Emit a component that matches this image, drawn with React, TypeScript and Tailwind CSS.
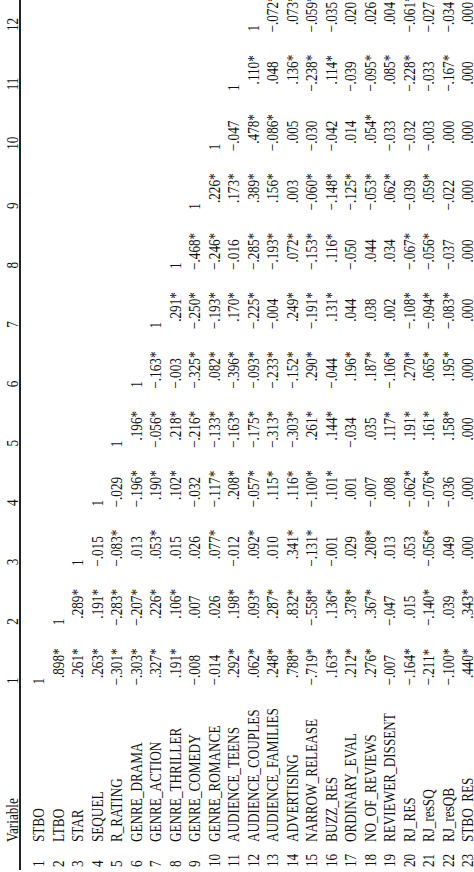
const rows: [string, string[]][] = [
  ["STBO", ["1"]],
  ["LTBO", [".898*", "1"]],
  ["STAR", [".261*", ".289*", "1"]],
  ["SEQUEL", [".263*", ".191*", "−.015", "1"]],
  ["R_RATING", ["−.301*", "−.283*", "−.083*", "−.029", "1"]],
  ["GENRE_DRAMA", ["−.303*", "−.207*", ".013", "−.196*", ".196*", "1"]],
  ["GENRE_ACTION", [".327*", ".226*", ".053*", ".190*", "−.056*", "−.163*", "1"]],
  ["GENRE_THRILLER", [".191*", ".106*", ".015", ".102*", ".218*", "−.003", ".291*", "1"]],
  ["GENRE_COMEDY", ["−.008", ".007", ".026", "−.032", "−.216*", "−.325*", "−.250*", "−.468*", "1"]],
  ["GENRE_ROMANCE", ["−.014", ".026", ".077*", "−.117*", "−.133*", ".082*", "−.193*", "−.246*", ".226*", "1"]],
  ["AUDIENCE_TEENS", [".292*", ".198*", "−.012", ".208*", "−.163*", "−.396*", ".170*", "−.016", ".173*", "−.047", "1"]],
  ["AUDIENCE_COUPLES", [".062*", ".093*", ".092*", "−.057*", "−.175*", "−.093*", "−.225*", "−.285*", ".389*", ".478*", ".110*", "1"]],
  ["AUDIENCE_FAMILIES", [".248*", ".287*", ".010", ".115*", "−.313*", "−.233*", "−.004", "−.193*", ".156*", "−.086*", ".048", "−.072*"]],
  ["ADVERTISING", [".788*", ".832*", ".341*", ".116*", "−.303*", "−.152*", ".249*", ".072*", ".003", ".005", ".136*", ".073*"]],
  ["NARROW_RELEASE", ["−.719*", "−.558*", "−.131*", "−.100*", ".261*", ".290*", "−.191*", "−.153*", "−.060*", "−.030", "−.238*", "−.059*"]],
  ["BUZZ_RES", [".163*", ".136*", "−.001", ".101*", ".144*", "−.044", ".131*", ".116*", "−.148*", "−.042", ".114*", "−.035"]],
  ["ORDINARY_EVAL", [".212*", ".378*", ".029", ".001", "−.034", ".196*", ".044", "−.050", "−.125*", ".014", "−.039", ".020"]],
  ["NO_OF_REVIEWS", [".276*", ".367*", ".208*", "−.007", ".035", ".187*", ".038", ".044", "−.053*", ".054*", "−.095*", ".026"]],
  ["REVIEWER_DISSENT", ["−.007", "−.047", ".013", ".008", ".117*", "−.106*", ".002", ".034", ".062*", "−.033", ".085*", ".004"]],
  ["RJ_RES", ["−.164*", ".015", ".053", "−.062*", ".191*", ".270*", "−.108*", "−.067*", "−.039", "−.032", "−.228*", "−.061*"]],
  ["RJ_resSQ", ["−.211*", "−.140*", "−.056*", "−.076*", ".161*", ".065*", "−.094*", "−.056*", ".059*", "−.003", "−.033", "−.027"]],
  ["RJ_resQB", ["−.100*", ".039", ".049", "−.036", ".158*", ".195*", "−.083*", "−.037", "−.022", ".000", "−.167*", "−.034"]],
  ["STBO_RES", [".440*", ".343*", ".000", ".000", ".000", ".000", ".000", ".000", ".000", ".000", ".000", ".000"]],
];

// widths are before the 0.776 horizontal squeeze of the printed table
const cols = "grid grid-cols-[36px_199.8px_repeat(12,76.5px)]";

// sign slot + decimal part, so the points line up down each column
const Value = ({ v }: { v: string }) => {
  const neg = v.startsWith("−");
  const isOne = v === "1";
  const rest = neg ? v.slice(1) : isOne ? "" : v;
  return (
    <div className="flex">
      <span className="w-[11.6px] text-right">{neg ? "−" : isOne ? "1" : ""}</span>
      <span>{rest}</span>
    </div>
  );
};

const App = () => {
  return (
    <div className="w-[474px] h-[872px] overflow-hidden bg-white">
      <div
        className="w-[1124px] h-[474px] origin-top-left scale-x-[0.776] -rotate-90 translate-y-[872px] text-[17px] text-[#111] whitespace-nowrap"
        style={{ fontFamily: '"Liberation Serif", "Times New Roman", serif' }}
      >
        <div className={`${cols} h-[21px] -mt-[2px] items-center border-b-[2.5px] border-[#222]`}>
          <span />
          <span>Variable</span>
          {Array.from({ length: 12 }, (_, i) => (
            <span key={i} className="pl-[3.9px]">
              {i + 1}
            </span>
          ))}
        </div>
        <div className="pt-[5px]">
          {rows.map(([name, vals], r) => (
            <div key={name} className={`${cols} h-[19.5px] items-center`}>
              <span className="pl-[3.9px]">{r + 1}</span>
              <span>{name}</span>
              {vals.map((v, c) => (
                <Value key={c} v={v} />
              ))}
            </div>
          ))}
        </div>
      </div>
    </div>
  );
};

export default App;
